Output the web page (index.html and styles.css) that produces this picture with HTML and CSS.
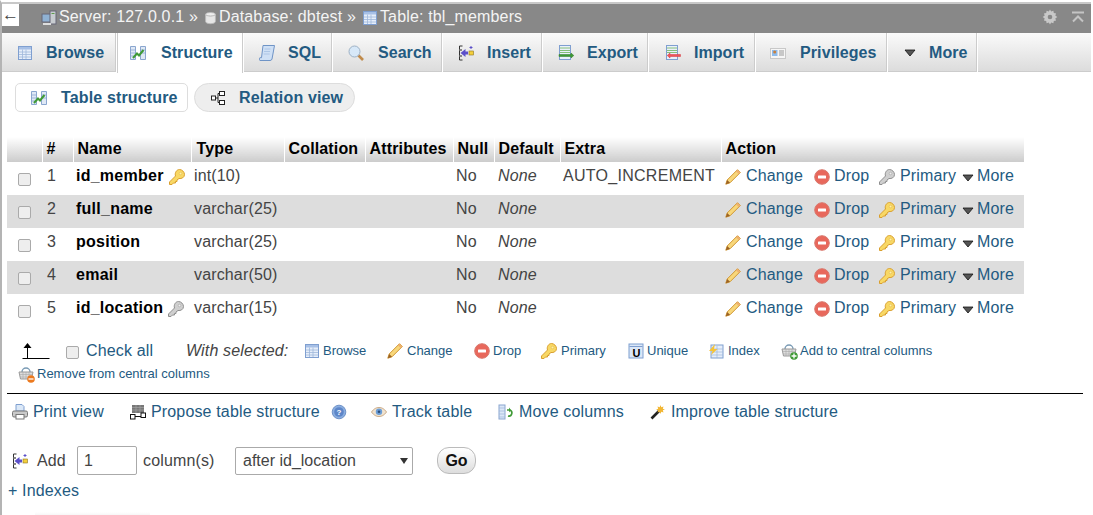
FILE: index.html
```html
<!DOCTYPE html>
<html lang="en">
<head>
<meta charset="utf-8">
<title>tbl_members</title>
<link rel="stylesheet" href="styles.css">
</head>
<body>
<svg class="sprite" xmlns="http://www.w3.org/2000/svg">
<symbol id="key" viewBox="0 0 16 16"><path d="M10.500.5C13 .5 15.500 3 15.500 5.500 15.500 8.500 12.500 10 10 9.500L8 11v1.500H6.500V14h-2L3 15.500H.5V13l6-6C5.500 4 7.500.5 10.500.5z" fill="#f8d865" stroke="#d99f2e"/><circle cx="11.500" cy="4.500" r="1.300" fill="#fdf0a8" stroke="#e0b040" stroke-width=".5"/></symbol>
<symbol id="keyg" viewBox="0 0 16 16"><path d="M10.500.5C13 .5 15.500 3 15.500 5.500 15.500 8.500 12.500 10 10 9.500L8 11v1.500H6.500V14h-2L3 15.500H.5V13l6-6C5.500 4 7.500.5 10.500.5z" fill="#cfcfcf" stroke="#8e8e8e"/><circle cx="11.500" cy="4.500" r="1.300" fill="#eee" stroke="#999" stroke-width=".5"/></symbol>
<symbol id="pencil" viewBox="0 0 16 16"><path d="M12.500.7 15.300 3.500 5 13.800.8 15.200 2.200 11z" fill="#f8d77a" stroke="#cf9530"/><path d="M2.200 11 .8 15.200 5 13.800z" fill="#9a6226"/><path d="M12.500.7 15.300 3.500 13.700 5.100 10.900 2.300z" fill="#eeb070"/></symbol>
<symbol id="drop" viewBox="0 0 16 16"><circle cx="8" cy="8" r="7.300" fill="#e8685c" stroke="#d9786d"/><rect x="4" y="6.500" width="8" height="3" rx=".6" fill="#fff"/></symbol>
<symbol id="tbl" viewBox="0 0 16 16"><rect x="1.500" y="1.500" width="13" height="13" fill="#e6eefa" stroke="#7f9fd0"/><rect x="2" y="2" width="12" height="2.500" fill="#a7c0e6"/><path d="M2 7h12M2 9.500h12M2 12h12M5.500 4.500V14M9 4.500V14" stroke="#9fb7da" stroke-width=".8"/></symbol>
<symbol id="struct" viewBox="0 0 16 16"><path d="M.5 1.500h5v13h-5zM10.500 1.500h5v13h-5z" fill="#dfe8f5" stroke="#8aa6cf"/><path d="M1 5h4M1 8h4M1 11h4M11 5h4M11 8h4" stroke="#9db5d8"/><path d="M3 13 7 8.500l2 2L13.500 5" fill="none" stroke="#3f9a35" stroke-width="2"/></symbol>
<symbol id="sql" viewBox="0 0 16 16"><path d="M4 .5h11.500L13 14c-.2 1-1 1.500-2 1.500H1c-1 0-1-2.800 0-2.800h1.500z" fill="#cfe0f5" stroke="#6f94c6"/><path d="M5.500 4h6M5 6.500h6M4.700 9h6" stroke="#a5bfe2" stroke-width=".8"/></symbol>
<symbol id="lens" viewBox="0 0 16 16"><path d="m9.500 9.500 5.500 5.500" stroke="#c08a4a" stroke-width="2.600"/><circle cx="6.500" cy="6.500" r="5.500" fill="#d7e8f8" stroke="#9db1c5"/></symbol>
<symbol id="ins" viewBox="0 0 16 16"><path d="M4.500 1H1.500v14h3" fill="none" stroke="#333"/><rect x="1.500" y="4" width="2.500" height="2" fill="#888"/><rect x="1.500" y="10" width="2.500" height="2" fill="#888"/><path d="M2.500 8 7.500 4v2.500h2.500v3H7.500V12z" fill="#5b4fc9"/><rect x="11" y="6" width="4.500" height="4" fill="#f4cf3c" stroke="#8a7320" stroke-width=".6"/><path d="M13 1v3M11.500 2.500h3" stroke="#5b4fc9"/></symbol>
<symbol id="exp" viewBox="0 0 16 16"><rect x="1.500" y=".5" width="11" height="14" fill="#eaf1fb" stroke="#7f9fd0"/><path d="M2 3h10M2 5.500h10M2 7.500h10" stroke="#86c07a"/><path d="M1 9.500h12V8l2.800 2.500L13 13v-1.500H1z" fill="#3f9a35" stroke="#2f7a28" stroke-width=".5"/></symbol>
<symbol id="imp" viewBox="0 0 16 16"><rect x="1.500" y=".5" width="11" height="14" fill="#eaf1fb" stroke="#7f9fd0"/><path d="M2 3h10M2 5.500h10M2 7.500h10" stroke="#86c07a"/><path d="M15.500 9.500H5V8l-2.800 2.500L5 13v-1.500h10.500z" fill="#f0555a" stroke="#d03a3f" stroke-width=".5"/></symbol>
<symbol id="priv" viewBox="0 0 16 16"><rect x=".5" y="3.500" width="15" height="10" fill="#f6f6f6" stroke="#c8c8c8"/><rect x="2" y="5" width="5.500" height="6" fill="#8fbcec"/><circle cx="4.700" cy="7" r="1.500" fill="#c9803c"/><path d="M9 6h5M9 8h5M9 10h5" stroke="#999"/></symbol>
<symbol id="tri" viewBox="0 0 12 8"><path d="M1 1h10L6 7z" fill="#555" stroke="#111" stroke-width=".8"/></symbol>
<symbol id="rel" viewBox="0 0 16 16"><g fill="#fff" stroke="#222"><rect x="1.500" y="6" width="4" height="4"/><rect x="9.500" y="1.500" width="5" height="4"/><rect x="9.500" y="10.500" width="5" height="4"/></g><path d="M5.500 8H8M8 3.500V12.500M8 3.500h1.500M8 12.500h1.500" stroke="#222" fill="none"/></symbol>
<symbol id="srv" viewBox="0 0 16 16"><rect x="1" y="4" width="9" height="8" fill="#8fb1d3" stroke="#667"/><rect x="9" y="1" width="6" height="13" fill="#c8ccd0" stroke="#667"/><rect x="10.500" y="3" width="3" height="1" fill="#5c9a4a"/><path d="M2 14h8" stroke="#ddd" stroke-width="2"/></symbol>
<symbol id="db" viewBox="0 0 16 16"><ellipse cx="8" cy="3.500" rx="6" ry="2.200" fill="#eee" stroke="#bbb"/><path d="M2 3.500v9c0 1.200 2.700 2.500 6 2.500s6-1.300 6-2.500v-9c0 1.200-2.700 2.200-6 2.200s-6-1-6-2.200z" fill="#e6e6e6" stroke="#bbb"/></symbol>
<symbol id="gear" viewBox="0 0 16 16"><path d="M8 .5l1.200 2 2.200-.8.4 2.300 2.300.4-.8 2.200 2 1.400-2 1.400.8 2.200-2.300.4-.4 2.300-2.200-.8L8 15.500l-1.200-2-2.200.8-.4-2.300-2.300-.4.8-2.200-2-1.400 2-1.400-.8-2.200L4.200 4l.4-2.300 2.200.8z" fill="#c8c8c8"/><circle cx="8" cy="8" r="2.300" fill="#888"/></symbol>
<symbol id="up" viewBox="0 0 14 12"><path d="M1 1.500h12" stroke="#c4c4c4" stroke-width="2"/><path d="M2 10.500 7 5.500l5 5" fill="none" stroke="#c4c4c4" stroke-width="2"/></symbol>
<symbol id="print" viewBox="0 0 16 16"><path d="M4 .5h6l2 2V7H4z" fill="#dbe8f7" stroke="#7f9fd0"/><rect x=".5" y="7" width="15" height="6" rx="1.500" fill="#c9c9c9" stroke="#777"/><rect x="4" y="10.500" width="8" height="4.500" fill="#fff" stroke="#777"/></symbol>
<symbol id="prop" viewBox="0 0 16 16"><rect x="2" y="1" width="12" height="8" fill="#777"/><path d="M2 3.500h12M2 6h12M6 1v8M10 1v8" stroke="#aaa" stroke-width=".6"/><g fill="#fff" stroke="#111"><rect x=".5" y="10.500" width="4.500" height="4.500"/><rect x="11" y="9" width="4.500" height="4.500"/></g><path d="M5 12.500h6" stroke="#111"/></symbol>
<symbol id="help" viewBox="0 0 16 16"><circle cx="8" cy="8" r="6.800" fill="#8aaee0" stroke="#6f92c8"/><circle cx="8" cy="8" r="4.800" fill="#5d86c8"/><text x="8" y="11" font-family="Liberation Sans" font-weight="700" font-size="8" text-anchor="middle" fill="#fff">?</text></symbol>
<symbol id="eye" viewBox="0 0 16 16"><path d="M.5 8C3 4.500 5.500 3.500 8 3.500s5 1 7.500 4.500c-2.500 3.500-5 4.500-7.500 4.500S3 11.500.5 8z" fill="#f0e3d0" stroke="#c9a884"/><circle cx="8" cy="7.800" r="3.200" fill="#6c9ed6"/><circle cx="8" cy="7.800" r="1.300" fill="#2c4f7c"/></symbol>
<symbol id="move" viewBox="0 0 16 16"><rect x="1" y="1" width="6" height="14" fill="#dbe7f7" stroke="#8aa6cf"/><path d="M1 4h6M1 7h6M1 10h6M1 13h6" stroke="#9db5d8" stroke-width=".7"/><path d="M9 6h2.500a3 3 0 1 1-1.500 6" fill="none" stroke="#3f9a35" stroke-width="1.600"/><path d="m11 3.500 2 2.500-2 2.500z" fill="#3f9a35"/></symbol>
<symbol id="wand" viewBox="0 0 16 16"><path d="M1.500 14.500 9 7" stroke="#222" stroke-width="2.600"/><path d="M10.500 1l.8 2.200L13.500 2.500l-.7 2.200L15 5.500l-2.200.8.700 2.200-2.200-.7L10.500 10 9.700 7.800 7.500 8.500l.7-2.200L6 5.500l2.200-.8-.7-2.200 2.200.7z" fill="#f2b632"/></symbol>
<symbol id="uni" viewBox="0 0 16 16"><rect x="1" y="1" width="14" height="14" fill="#dbe7f7" stroke="#7f9fd0"/><path d="M1.500 3.500h13" stroke="#7f9fd0"/><text x="8.500" y="14" font-family="Liberation Sans" font-weight="700" font-size="11" text-anchor="middle" fill="#000">U</text></symbol>
<symbol id="idx" viewBox="0 0 16 16"><rect x="3" y="2" width="12" height="13" fill="#e6eefa" stroke="#7f9fd0"/><path d="M3 6h12M3 9h12M3 12h12M9 3v12" stroke="#9fb7da" stroke-width=".7"/><path d="M7 1 1 8h3.500L3 12l6.500-6H6z" fill="#f4c33a"/></symbol>
<symbol id="basket" viewBox="0 0 16 16"><path d="M4 6a4 4 0 0 1 8 0" fill="none" stroke="#7a9bb5" stroke-width="1.400"/><path d="M1 6h14l-1.500 7h-11z" fill="#ddd" stroke="#999"/><path d="M1.500 8.500h13M2 11h12M5 6v7M8 6v7M11 6v7" stroke="#aaa" stroke-width=".6"/></symbol>
<symbol id="plus" viewBox="0 0 8 8"><circle cx="4" cy="4" r="3.800" fill="#3f9a35"/><path d="M1.500 4h5M4 1.500v5" stroke="#fff" stroke-width="1.300"/></symbol>
<symbol id="minus" viewBox="0 0 8 8"><circle cx="4" cy="4" r="3.800" fill="#ec7a1f"/><path d="M1.500 4h5" stroke="#fff" stroke-width="1.300"/></symbol>
<symbol id="arrowup" viewBox="0 0 28 16"><path d="M.5 15.500h27M5.500 15.500V3" fill="none" stroke="#000"/><path d="M5.500 0 9.500 5h-8z" fill="#000"/></symbol>
</svg>

<div class="page">
  <header class="topbar">
    <span class="back">←</span>
    <nav class="crumbs">
      <svg class="ic"><use href="#srv"/></svg><span class="crumb">Server: 127.0.0.1 »</span>
      <svg class="ic ic-db"><use href="#db"/></svg><span class="crumb">Database: dbtest »</span>
      <svg class="ic"><use href="#tbl"/></svg><span class="crumb">Table: tbl_members</span>
    </nav>
    <svg class="ic gear"><use href="#gear"/></svg>
    <svg class="chev"><use href="#up"/></svg>
  </header>

  <nav class="tabs">
    <a class="tab t-browse"><svg class="ic"><use href="#tbl"/></svg>Browse</a>
    <a class="tab t-structure active"><svg class="ic"><use href="#struct"/></svg>Structure</a>
    <a class="tab t-sql"><svg class="ic"><use href="#sql"/></svg>SQL</a>
    <a class="tab t-search"><svg class="ic"><use href="#lens"/></svg>Search</a>
    <a class="tab t-insert"><svg class="ic"><use href="#ins"/></svg>Insert</a>
    <a class="tab t-export"><svg class="ic"><use href="#exp"/></svg>Export</a>
    <a class="tab t-import"><svg class="ic"><use href="#imp"/></svg>Import</a>
    <a class="tab t-priv"><svg class="ic"><use href="#priv"/></svg>Privileges</a>
    <a class="tab t-more"><svg class="tri-lg"><use href="#tri"/></svg>More</a>
  </nav>

  <div class="subtabs">
    <a class="sub sub-on"><svg class="ic"><use href="#struct"/></svg>Table structure</a>
    <a class="sub sub-off"><svg class="ic"><use href="#rel"/></svg>Relation view</a>
  </div>

  <table class="cols">
    <thead>
      <tr>
        <th class="c-check"></th><th class="c-num">#</th><th class="c-name">Name</th><th class="c-type">Type</th><th class="c-coll">Collation</th><th class="c-attr">Attributes</th><th class="c-null">Null</th><th class="c-def">Default</th><th class="c-extra">Extra</th><th class="c-act">Action</th>
      </tr>
    </thead>
    <tbody>
      <tr>
        <td class="tc"><input type="checkbox" class="cb"></td><td class="num">1</td>
        <td><span class="fld"><b>id_member</b><svg class="ic"><use href="#key"/></svg></span></td><td class="ty">int(10)</td><td></td><td></td><td>No</td><td class="none"><i>None</i></td><td class="ex">AUTO_INCREMENT</td>
        <td class="acts"><div class="actrow"><a class="act a-change"><svg class="ic"><use href="#pencil"/></svg>Change</a><a class="act a-drop"><svg class="ic"><use href="#drop"/></svg>Drop</a><a class="act a-prim"><svg class="ic"><use href="#keyg"/></svg>Primary</a><a class="act a-more"><svg class="tri"><use href="#tri"/></svg>More</a></div></td>
      </tr>
      <tr>
        <td class="tc"><input type="checkbox" class="cb"></td><td class="num">2</td>
        <td><span class="fld"><b>full_name</b></span></td><td class="ty">varchar(25)</td><td></td><td></td><td>No</td><td class="none"><i>None</i></td><td></td>
        <td class="acts"><div class="actrow"><a class="act a-change"><svg class="ic"><use href="#pencil"/></svg>Change</a><a class="act a-drop"><svg class="ic"><use href="#drop"/></svg>Drop</a><a class="act a-prim"><svg class="ic"><use href="#key"/></svg>Primary</a><a class="act a-more"><svg class="tri"><use href="#tri"/></svg>More</a></div></td>
      </tr>
      <tr>
        <td class="tc"><input type="checkbox" class="cb"></td><td class="num">3</td>
        <td><span class="fld"><b>position</b></span></td><td class="ty">varchar(25)</td><td></td><td></td><td>No</td><td class="none"><i>None</i></td><td></td>
        <td class="acts"><div class="actrow"><a class="act a-change"><svg class="ic"><use href="#pencil"/></svg>Change</a><a class="act a-drop"><svg class="ic"><use href="#drop"/></svg>Drop</a><a class="act a-prim"><svg class="ic"><use href="#key"/></svg>Primary</a><a class="act a-more"><svg class="tri"><use href="#tri"/></svg>More</a></div></td>
      </tr>
      <tr>
        <td class="tc"><input type="checkbox" class="cb"></td><td class="num">4</td>
        <td><span class="fld"><b>email</b></span></td><td class="ty">varchar(50)</td><td></td><td></td><td>No</td><td class="none"><i>None</i></td><td></td>
        <td class="acts"><div class="actrow"><a class="act a-change"><svg class="ic"><use href="#pencil"/></svg>Change</a><a class="act a-drop"><svg class="ic"><use href="#drop"/></svg>Drop</a><a class="act a-prim"><svg class="ic"><use href="#key"/></svg>Primary</a><a class="act a-more"><svg class="tri"><use href="#tri"/></svg>More</a></div></td>
      </tr>
      <tr>
        <td class="tc"><input type="checkbox" class="cb"></td><td class="num">5</td>
        <td><span class="fld"><b>id_location</b><svg class="ic"><use href="#keyg"/></svg></span></td><td class="ty">varchar(15)</td><td></td><td></td><td>No</td><td class="none"><i>None</i></td><td></td>
        <td class="acts"><div class="actrow"><a class="act a-change"><svg class="ic"><use href="#pencil"/></svg>Change</a><a class="act a-drop"><svg class="ic"><use href="#drop"/></svg>Drop</a><a class="act a-prim"><svg class="ic"><use href="#key"/></svg>Primary</a><a class="act a-more"><svg class="tri"><use href="#tri"/></svg>More</a></div></td>
      </tr>
    </tbody>
  </table>

  <div class="selrow">
    <svg class="arrowup"><use href="#arrowup"/></svg>
    <label class="checkall"><input type="checkbox" class="cb">Check all</label>
    <i class="withsel">With selected:</i>
    <a class="sm s-browse"><svg class="ic"><use href="#tbl"/></svg>Browse</a>
    <a class="sm s-change"><svg class="ic"><use href="#pencil"/></svg>Change</a>
    <a class="sm s-drop"><svg class="ic"><use href="#drop"/></svg>Drop</a>
    <a class="sm s-prim"><svg class="ic"><use href="#key"/></svg>Primary</a>
    <a class="sm s-uni"><svg class="ic"><use href="#uni"/></svg>Unique</a>
    <a class="sm s-idx"><svg class="ic"><use href="#idx"/></svg>Index</a>
    <a class="sm s-add"><span class="badged"><svg class="ic"><use href="#basket"/></svg><svg class="badge"><use href="#plus"/></svg></span>Add to central columns</a>
  </div>
  <div class="selrow2">
    <a class="sm s-rem"><span class="badged"><svg class="ic"><use href="#basket"/></svg><svg class="badge"><use href="#minus"/></svg></span>Remove from central columns</a>
  </div>
  <hr class="rule">

  <div class="tools">
    <a class="tool t1"><svg class="ic"><use href="#print"/></svg>Print view</a>
    <a class="tool t2"><svg class="ic"><use href="#prop"/></svg>Propose table structure<svg class="ic help"><use href="#help"/></svg></a>
    <a class="tool t3"><svg class="ic"><use href="#eye"/></svg>Track table</a>
    <a class="tool t4"><svg class="ic"><use href="#move"/></svg>Move columns</a>
    <a class="tool t5"><svg class="ic"><use href="#wand"/></svg>Improve table structure</a>
  </div>

  <form class="addrow">
    <svg class="ic"><use href="#ins"/></svg>
    <span class="add-l">Add</span>
    <input class="num-in" type="text" value="1">
    <span class="add-c">column(s)</span>
    <span class="selwrap"><select class="pos"><option>after id_location</option></select></span>
    <button class="go" type="button">Go</button>
  </form>
  <a class="indexes">+ Indexes</a>
  <div class="ghost"></div>
</div>
</body>
</html>
```
FILE: styles.css
```css
* { box-sizing: border-box; }
html, body { margin: 0; height: 100%; overflow: hidden; background: #fff; }
body { font: 16px/18px "Liberation Sans", Arial, sans-serif; color: #444; letter-spacing: .15px; }
a { color: #235a81; text-decoration: none; }
.sprite { display: none; }
.ic { width: 16px; height: 16px; flex: none; display: block; }

.page { height: 100%; width: 1091px; border-left: 2px solid #b4b4b4; border-top: 3px solid #fff; position: relative; }
.topbar { height: 31px; margin-top: -1px; border-top: 2px solid #c8c8c8; background: #888; display: flex; align-items: flex-start; color: #fff; }
.back { width: 17px; height: 22px; background: #fff; color: #444; font-size: 17px; line-height: 22px; letter-spacing: 0; display: flex; justify-content: center; }
.crumbs { display: flex; align-items: center; height: 26px; margin-left: 22px; flex: 1; }
.crumb { margin: 0 6px 0 2px; white-space: nowrap; color: #f4f4f4; }
.crumbs .ic { margin-top: 2px; }
.crumbs .ic-db { width: 13px; }
.gear { margin-top: 5px; margin-right: 13px; }
.chev { width: 14px; height: 12px; margin-top: 7px; margin-right: 6px; }

.tabs { display: flex; height: 39px; background: linear-gradient(#fafafa, #dcdcdc); border-bottom: 1px solid #ccc; }
.tab { display: flex; align-items: center; font-weight: 700; height: 39px; border-right: 1px solid #fff; box-shadow: inset -1px 0 0 #ccc; white-space: nowrap; letter-spacing: .05px; }
.tab .ic { margin-right: 13px; }
.tab.active { background: #fff; height: 40px; box-shadow: inset -1px 0 0 #ccc, inset 1px 0 0 #ccc; }
.t-browse { width: 115px; padding-left: 15px; }
.t-structure { width: 127px; padding-left: 13px; }
.t-structure .ic { margin-right: 15px; }
.t-sql { width: 89px; padding-left: 15px; }
.t-search { width: 110px; padding-left: 15px; }
.t-search .ic { margin-right: 14px; }
.t-insert { width: 100px; padding-left: 15px; }
.t-export { width: 106px; padding-left: 15px; }
.t-import { width: 107px; padding-left: 16px; }
.t-priv { width: 132px; padding-left: 14px; letter-spacing: .1px; }
.t-priv .ic { margin-right: 14px; }
.t-more { width: 90px; padding-left: 16px; }
.tri-lg { width: 12px; height: 8px; margin-right: 13px; }

.subtabs { display: flex; gap: 6px; margin: 11px 0 0 13px; height: 29px; }
.sub { display: flex; align-items: center; font-weight: 700; border: 1px solid #ddd; }
.sub .ic { margin-right: 14px; }
.sub-on { width: 173px; padding-left: 15px; background: #fff; border-radius: 5px; }
.sub-off { width: 161px; padding-left: 15px; background: #eee; border-radius: 15px; }
.sub-off .ic { margin-right: 13px; }

.cols { border-collapse: collapse; table-layout: fixed; width: 1017px; margin: 25px 0 0 5px; }
.cols th { height: 25px; padding: 0 0 2px 4px; text-align: left; color: #000; background: linear-gradient(#fff, #ccc); border-right: 1px solid #fff; font-weight: 700; }
.cols th:last-child { border-right: 0; }
.cols td { height: 33px; padding: 5px 0 0 3px; vertical-align: top; white-space: nowrap; }
.cols tbody tr:nth-child(even) td { background: #ddd; }
.c-check { width: 35px; }
.c-num { width: 31px; }
.c-name { width: 118px; }
.c-type { width: 93px; }
.c-coll { width: 81px; }
.c-attr { width: 88px; }
.c-null { width: 41px; }
.c-def { width: 66px; }
.c-extra { width: 161px; }
.c-act { width: 303px; }
.cols th.c-type { padding-left: 5px; }
.cols td.tc { padding: 11px 0 0 11px; }
.cols td.num { padding-left: 5px; }
.cols td.none { padding-left: 4px; }
.cols td.ex { letter-spacing: .28px; }
.cb { appearance: none; display: block; width: 13px; height: 13px; margin: 0; background: #eee; border: 1px solid #aaa; border-radius: 2px; flex: none; }
.fld { display: flex; align-items: center; color: #000; letter-spacing: .25px; }
.fld .ic { margin-left: 5px; margin-top: 1px; }
.actrow { display: flex; align-items: center; }
.cols td.acts { padding-left: 4px; }
.act { display: flex; align-items: center; }
.act .ic { margin: 2px 5px 0 0; }
.a-change { width: 89px; }
.a-drop { width: 65px; }
.a-drop .ic { margin-right: 4px; }
.a-prim { width: 83px; }
.tri { width: 12px; height: 8px; margin: 3px 3px 0 0; }

.selrow { display: flex; align-items: center; height: 18px; margin: 15px 0 0 20px; }
.arrowup { width: 28px; height: 16px; margin-right: 16px; }
.checkall { display: flex; align-items: center; gap: 7px; color: #235a81; width: 120px; }
.checkall .cb { margin-top: 2px; }
.withsel { width: 118px; color: #444; white-space: nowrap; }
.sm { display: flex; align-items: center; font-size: 13px; white-space: nowrap; letter-spacing: 0; }
.sm .ic { margin-right: 3px; }
.s-browse { width: 83px; }
.s-change { width: 87px; }
.s-drop { width: 67px; }
.s-prim { width: 87px; }
.s-prim .ic, .s-change .ic { margin-right: 4px; }
.s-uni { width: 80px; }
.s-idx { width: 73px; }
.s-idx .ic { margin-right: 4px; }
.badged { position: relative; display: block; margin-right: 3px; }
.badged .ic { margin: 0; }
.badge { position: absolute; right: -1px; bottom: -1px; width: 8px; height: 8px; }
.selrow2 { display: flex; height: 18px; margin: 5px 0 0 16px; }
.rule { border: 0; border-top: 1px solid #000; height: 0; margin: 10px 0 0 5px; width: 1076px; }

.tools { display: flex; margin: 9px 0 0 10px; height: 18px; }
.tool { display: flex; align-items: center; white-space: nowrap; }
.tool .ic { margin-right: 5px; }
.t1 { width: 118px; }
.t2 { width: 241px; }
.help { margin-left: 11px; }
.t3 { width: 127px; }
.t4 { width: 152px; }

.addrow { display: flex; align-items: center; height: 29px; margin: 25px 0 0 10px; }
.add-l { margin-left: 9px; width: 40px; }
.num-in { width: 60px; height: 29px; margin: 0; padding: 0 6px; border: 1px solid #aaa; border-radius: 2px; font: inherit; color: #444; }
.add-c { margin-left: 6px; width: 92px; }
.selwrap { position: relative; display: block; width: 178px; height: 28px; }
.selwrap::after { content: ""; position: absolute; right: 5px; top: 11px; border: 4px solid transparent; border-top: 6px solid #333; border-bottom: 0; }
.pos { appearance: none; width: 100%; height: 100%; margin: 0; padding: 0 7px; background: #fff; border: 1px solid #aaa; border-radius: 2px; font: inherit; color: #444; }
.go { width: 39px; height: 27px; margin: 0 0 0 24px; padding: 0; border: 1px solid #bbb; border-radius: 12px; background: linear-gradient(#fff, #ddd); font: 700 16px "Liberation Sans", Arial, sans-serif; color: #111; }
.indexes { display: block; margin: 7px 0 0 6px; height: 18px; }
.ghost { width: 115px; height: 6px; margin: 12px 0 0 33px; background: linear-gradient(#fff, #eee); }
```
